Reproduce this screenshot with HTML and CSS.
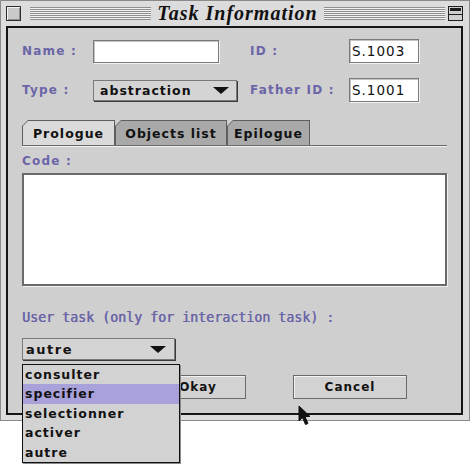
FILE: index.html
```html
<!DOCTYPE html>
<html>

<head>
    <title>Task Information</title>
    <link rel="stylesheet" href="styles.css">
</head>

<body>

    <div class="window">
        <div class="titlebar">
            <span class="close-box"></span>
            <span class="stripes"></span>
            <span class="title">Task Information</span>
            <span class="stripes"></span>
            <svg class="zoom-box" width="15" height="15" viewBox="0 0 15 15">
                <rect x="0.5" y="0.5" width="14" height="14" fill="#cfcfcf" stroke="#1e1e1e" />
                <rect x="2" y="2" width="11" height="3" fill="#1e1e1e" />
                <line x1="1" y1="8.5" x2="14" y2="8.5" stroke="#1e1e1e" />
            </svg>
        </div>

        <div class="frame">
            <div class="fields">
                <span class="lbl">Name :</span>
                <input type="text" class="field name-field" value="">
                <span class="lbl">ID :</span>
                <input type="text" class="field id-field" value="S.1003">

                <span class="lbl">Type :</span>
                <div class="popup type-popup"><span>abstraction</span><span class="arrow"></span></div>
                <span class="lbl">Father ID :</span>
                <input type="text" class="field id-field" value="S.1001">
            </div>

            <div class="tabs">
                <div class="tab active" style="width: 93px"><span>Prologue</span></div>
                <div class="tab" style="width: 112px"><span>Objects list</span></div>
                <div class="tab" style="width: 83px"><span>Epilogue</span></div>
            </div>

            <div class="lbl code-lbl">Code :</div>
            <textarea class="code"></textarea>

            <div class="user-lbl">User task (only for interaction task) :</div>
            <div class="popup user-popup"><span>autre</span><span class="arrow"></span></div>

            <div class="buttons">
                <button class="btn okay">Okay</button>
                <button class="btn cancel">Cancel</button>
            </div>
        </div>
    </div>

    <div class="menu">
        <div class="item">consulter</div>
        <div class="item sel">specifier</div>
        <div class="item">selectionner</div>
        <div class="item">activer</div>
        <div class="item">autre</div>
    </div>

    <svg class="cursor" width="14" height="22" viewBox="0 0 14 22">
        <path d="M1 1 L1 16 L4.5 12.5 L7.5 19.5 L10 18.5 L7 11.5 L12 11.5 Z" fill="#111" stroke="#111" stroke-width="1" />
    </svg>

</body>

</html>
```

FILE: styles.css
```css
body {
    margin: 0;
    width: 474px;
    height: 466px;
    overflow: hidden;
    position: relative;
    background: #ffffff;
    font-family: "DejaVu Sans", sans-serif;
    color: #111;
}

.window {
    width: 470px;
    height: 421px;
    box-sizing: border-box;
    border: 1px solid #8a8a8a;
    background: #dcdcdc;
    display: flex;
    flex-direction: column;
}

.titlebar {
    height: 25px;
    flex: none;
    display: flex;
    align-items: center;
    padding: 0 6px 0 5px;
}

.close-box {
    width: 15px;
    height: 15px;
    box-sizing: border-box;
    border: 1px solid #2e2e2e;
    background: #c9c9c9;
    box-shadow: inset 1px 1px 0 #f4f4f4, inset -1px -1px 0 #8c8c8c;
    margin-right: 9px;
}

.stripes {
    flex: 1;
    height: 13px;
    background: repeating-linear-gradient(to bottom, #8e8e8e 0 1px, #f2f2f2 1px 2px);
}

.title {
    padding: 0 6px;
    font-family: "Liberation Serif", serif;
    font-style: italic;
    font-weight: bold;
    font-size: 20px;
    letter-spacing: 1px;
    line-height: 25px;
}

.zoom-box {
    margin-left: 3px;
}

.frame {
    flex: 1;
    margin: 0 6px 5px 5px;
    border: 2px solid #151515;
    background: #cfcfcf;
    padding: 11px 0 0 14px;
}

.fields {
    display: grid;
    grid-template-columns: 71px 157px 99px 70px;
    grid-auto-rows: 24px;
    row-gap: 15px;
    align-items: center;
}

.lbl {
    color: #6b65a8;
    font-weight: bold;
    font-size: 12px;
    letter-spacing: 1.2px;
    line-height: 14px;
}

.field {
    box-sizing: border-box;
    height: 24px;
    margin: 0;
    padding: 0 0 0 2px;
    border: 1px solid #7a7a7a;
    background: #ffffff;
    box-shadow: inset 1px 1px 0 #c4c4c4, 1px 1px 0 #f2f2f2;
    font-family: "DejaVu Sans", sans-serif;
    font-size: 13.5px;
    letter-spacing: 1px;
    color: #111;
    outline: none;
}

.name-field {
    width: 126px;
    height: 23px;
}

.id-field {
    width: 70px;
}

.popup {
    box-sizing: border-box;
    display: flex;
    justify-content: space-between;
    align-items: center;
    border: 1px solid #7a7a7a;
    box-shadow: 1px 1px 0 #3a3a3a;
    background: #d4d4d4;
    font-weight: bold;
    font-size: 12.5px;
    letter-spacing: 1px;
}

.type-popup {
    width: 144px;
    height: 21px;
    padding: 0 7px 0 6px;
}

.arrow {
    width: 0;
    height: 0;
    border-left: 8px solid transparent;
    border-right: 8px solid transparent;
    border-top: 7px solid #111;
}

.tabs {
    margin-top: 18px;
    width: 425px;
    display: flex;
    align-items: flex-end;
    border-bottom: 1px solid #6a6a6a;
    box-shadow: 0 1px 0 #f0f0f0;
}

.tab {
    height: 25px;
    box-sizing: border-box;
    padding: 1px 1px 0 1px;
    background: #5e5e5e;
    clip-path: polygon(6px 0, 100% 0, 100% 100%, 0 100%, 0 6px);
}

.tab span {
    display: flex;
    height: 100%;
    align-items: center;
    justify-content: center;
    background: #a9a9a9;
    clip-path: polygon(5px 0, 100% 0, 100% 100%, 0 100%, 0 5px);
    font-weight: bold;
    font-size: 12.5px;
    letter-spacing: 1px;
}

.tab.active span {
    background: #dadada;
}

.code-lbl {
    margin-top: 8px;
}

.code {
    display: block;
    margin: 5px 0 0 0;
    width: 425px;
    height: 113px;
    box-sizing: border-box;
    border: 2px solid #6a6a6a;
    background: #ffffff;
    box-shadow: 1px 1px 0 #f0f0f0;
    resize: none;
    outline: none;
}

.user-lbl {
    margin-top: 25px;
    color: #6b65a8;
    font-family: "DejaVu Sans Mono", monospace;
    font-size: 13.3px;
    line-height: 14px;
    text-shadow: 0.4px 0 0 #6b65a8;
}

.user-popup {
    margin-top: 13px;
    width: 153px;
    height: 22px;
    padding: 0 8px 0 3px;
    font-size: 13px;
    letter-spacing: 1.5px;
}

.buttons {
    margin-top: 15px;
    display: flex;
}

.btn {
    height: 24px;
    box-sizing: border-box;
    border: 1px solid #6a6a6a;
    background: #d2d2d2;
    box-shadow: inset 1px 1px 0 #f2f2f2;
    font-family: "DejaVu Sans", sans-serif;
    font-weight: bold;
    font-size: 12px;
    letter-spacing: 1px;
    color: #111;
    padding: 0;
}

.okay {
    margin-left: 128px;
    width: 96px;
}

.cancel {
    margin-left: 47px;
    width: 114px;
}

/* popup menu lying over the dialog */
.menu {
    position: absolute;
    left: 22px;
    top: 364px;
    width: 158px;
    box-sizing: border-box;
    border: 1px solid #111;
    background: #d2d2d2;
    box-shadow: 1px 1px 0 #8a8a8a;
}

.item {
    height: 19.4px;
    line-height: 19.4px;
    padding-left: 2px;
    font-weight: bold;
    font-size: 12.5px;
    letter-spacing: 1px;
}

.item.sel {
    background: #a9a1d9;
}

.cursor {
    position: absolute;
    left: 298px;
    top: 405px;
}
```
